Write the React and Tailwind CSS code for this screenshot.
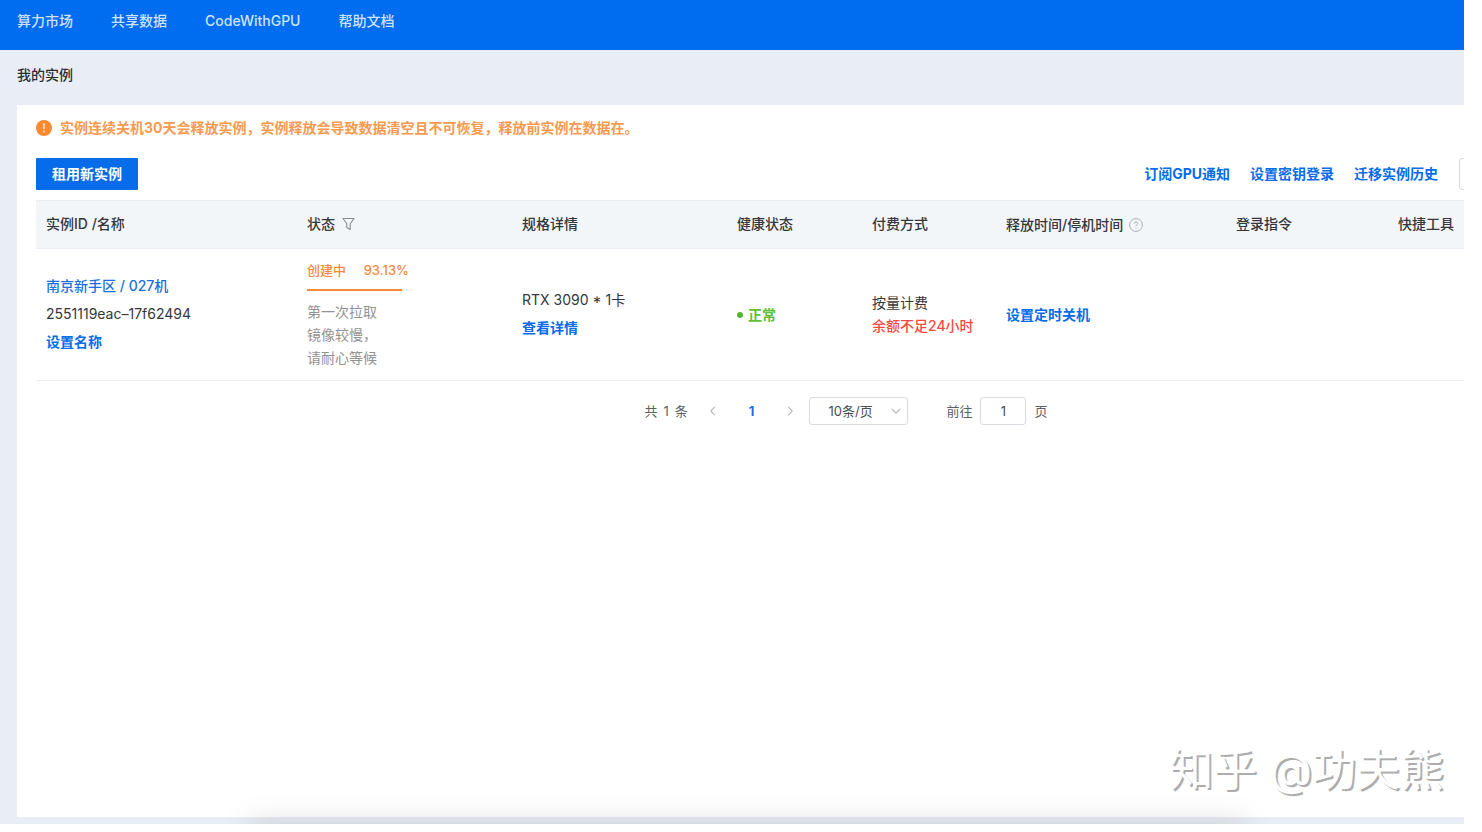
import React, { useState } from "react";

const NAV_ITEMS = ["算力市场", "共享数据", "CodeWithGPU", "帮助文档"];

const TOOLBAR_LINKS = ["订阅GPU通知", "设置密钥登录", "迁移实例历史"];

const INSTANCES = [
  {
    id: "2551119eac–17f62494",
    machine: "南京新手区 / 027机",
    progress: 93.13,
    spec: "RTX 3090 * 1卡",
    health: "正常",
    billing: "按量计费",
    billingTip: "余额不足24小时",
  },
];

function WarningIcon() {
  return (
    <svg className="size-4 shrink-0" viewBox="0 0 16 16" aria-hidden="true">
      <circle cx="8" cy="8" r="8" fill="#f98a32" />
      <path d="M8 3.8v4.8" stroke="#ffe6d2" strokeWidth="1.5" strokeLinecap="round" />
      <circle cx="8" cy="11.5" r="0.9" fill="#ffe6d2" />
    </svg>
  );
}

function FilterIcon() {
  return (
    <svg className="block h-[14px] w-[13px]" viewBox="0 0 13 14" fill="none" stroke="#8b8e93" strokeWidth="1.1" strokeLinejoin="round" aria-hidden="true">
      <path d="M1 1.5h11L8.2 6.8v5.7L4.8 10.6V6.8z" />
    </svg>
  );
}

function HelpIcon() {
  return (
    <svg className="size-[14px]" viewBox="0 0 14 14" fill="none" stroke="#a3a6ab" aria-hidden="true">
      <circle cx="7" cy="7" r="6.4" strokeWidth="0.9" />
      <path d="M5.3 5.6c0-1 .7-1.7 1.7-1.7s1.7.7 1.7 1.6c0 1.2-1.7 1.3-1.7 2.6" />
      <circle cx="7" cy="10" r="0.6" fill="#a3a6ab" stroke="none" />
    </svg>
  );
}

function Chevron({ d }) {
  return (
    <svg className="size-[10px]" viewBox="0 0 10 10" fill="none" stroke="#b4b8bf" strokeWidth="1.1" strokeLinecap="round" strokeLinejoin="round" aria-hidden="true">
      <path d={d} />
    </svg>
  );
}

function TextLink({ children }) {
  return (
    <a href="#" className="font-bold text-[#066cea]">
      {children}
    </a>
  );
}

function InstanceTable() {
  return (
    <table className="mt-[10px] w-full table-fixed border-collapse text-left text-[#34373b]">
      <colgroup>
        <col className="w-[261px]" />
        <col className="w-[215px]" />
        <col className="w-[215px]" />
        <col className="w-[135px]" />
        <col className="w-[134px]" />
        <col className="w-[230px]" />
        <col className="w-[162px]" />
        <col />
      </colgroup>
      <thead className="h-12 border-y border-[#ebeef2] bg-[#f3f6f9] whitespace-nowrap">
        <tr>
          <th className="pb-[2px] pl-[10px] font-medium">实例ID /名称</th>
          <th className="pb-[2px] pl-[10px] font-medium">
            <div className="flex items-center gap-[7px]">
              状态
              <button type="button" aria-label="筛选状态"><FilterIcon /></button>
            </div>
          </th>
          <th className="pb-[2px] pl-[10px] font-medium">规格详情</th>
          <th className="pb-[2px] pl-[10px] font-medium">健康状态</th>
          <th className="pb-[2px] pl-[10px] font-medium">付费方式</th>
          <th className="pl-[10px] font-medium">
            <div className="flex items-center gap-[6px]">
              释放时间/停机时间
              <HelpIcon />
            </div>
          </th>
          <th className="pb-[2px] pl-[10px] font-medium">登录指令</th>
          <th className="pb-[2px] pl-[10px] font-medium">快捷工具</th>
        </tr>
      </thead>
      <tbody>
        {INSTANCES.map((item) => (
          <tr key={item.id} className="h-[132px] border-b border-[#ebeef2]">
            <td className="pb-[2px] pl-[10px] leading-7">
              <a href="#" className="font-medium text-[#1a6fe0]">{item.machine}</a>
              <p>{item.id}</p>
              <TextLink>设置名称</TextLink>
            </td>
            <td className="pl-[10px]">
              <div className="w-[102px]">
                <div className="flex justify-between text-[13px] leading-5 font-medium text-[#f98a3c]">
                  <span>创建中</span>
                  <span>{item.progress}%</span>
                </div>
                <div className="mt-[9px] h-[2px] bg-[#ebeef5]">
                  <div className="h-full bg-[#f98a3c]" style={{ width: `${item.progress}%` }} />
                </div>
                <p className="mt-[9px] leading-[23px] text-[#929292]">
                  第一次拉取<br />镜像较慢，<br />请耐心等候
                </p>
              </div>
            </td>
            <td className="pb-[2px] pl-[10px] leading-7">
              <p>{item.spec}</p>
              <TextLink>查看详情</TextLink>
            </td>
            <td className="pl-[10px]">
              <div className="flex items-center gap-[5px] font-bold text-[#5cc234]">
                <span className="size-[6px] rounded-full bg-[#52b82b]" />
                {item.health}
              </div>
            </td>
            <td className="pb-[2px] pl-[10px] leading-[23px] whitespace-nowrap">
              <p>{item.billing}</p>
              <p className="font-medium text-[#f5483f]">{item.billingTip}</p>
            </td>
            <td className="pl-[10px]"><TextLink>设置定时关机</TextLink></td>
            <td />
            <td />
          </tr>
        ))}
      </tbody>
    </table>
  );
}

function Pagination() {
  const [page, setPage] = useState("1");

  return (
    <div className="mt-4 flex items-center justify-center pl-[192px] text-[13px] text-[#5c5f64]">
      <span className="flex gap-[6px]"><span>共</span><span>1</span><span>条</span></span>
      <button type="button" aria-label="上一页" className="ml-5"><Chevron d="M6.5 1.2 2.8 5l3.7 3.8" /></button>
      <button type="button" className="mx-[31px] font-bold text-[#1a6fe0]">1</button>
      <button type="button" aria-label="下一页"><Chevron d="M3.5 1.2 7.2 5 3.5 8.8" /></button>
      <div className="relative ml-[14px]">
        <select aria-label="每页条数" className="h-7 w-[99px] appearance-none rounded-[3px] border border-[#d9dce3] bg-white pl-[18px] text-[#4b4e53]">
          <option>10条/页</option>
          <option>20条/页</option>
        </select>
        <span className="pointer-events-none absolute top-[9px] right-[7px]">
          <Chevron d="M1 3.2 5 7l4-3.8" />
        </span>
      </div>
      <label htmlFor="goto" className="ml-[38px]">前往</label>
      <input
        id="goto"
        value={page}
        onChange={(e) => setPage(e.target.value)}
        className="mx-2 h-7 w-[46px] rounded-[3px] border border-[#d9dce3] text-center text-[#4b4e53]"
      />
      <span>页</span>
    </div>
  );
}

export default function App() {
  return (
    <div className="h-screen bg-white pr-[18px] pb-2 font-['Inter','Noto_Sans_CJK_SC',sans-serif] text-sm">
      <div className="relative flex h-full flex-col overflow-hidden bg-[#e9edf5]">
        <nav className="flex h-[50px] shrink-0 items-center gap-[38px] bg-[#006cf0] px-[17px] pb-[9px] text-[#cfe2fc]">
          {NAV_ITEMS.map((item) => (
            <a key={item} href="#" className="font-medium">{item}</a>
          ))}
        </nav>

        <h1 className="flex h-[55px] shrink-0 items-center px-[17px] pb-[5px] font-medium text-[#2b2e33]">我的实例</h1>

        <main className="mb-[7px] ml-[17px] flex-1 overflow-hidden bg-white pt-[13px] pl-[19px]">
          <p className="flex h-5 items-center gap-2 font-bold text-[#f99a50]">
            <WarningIcon />
            实例连续关机30天会释放实例，实例释放会导致数据清空且不可恢复，释放前实例在数据在。
          </p>

          <div className="mt-5 flex h-8 items-center">
            <button type="button" className="h-full rounded-[1px] bg-[#066cea] px-4 font-bold text-white">
              租用新实例
            </button>
            <div className="mr-[21px] ml-auto flex gap-5">
              {TOOLBAR_LINKS.map((link) => (
                <TextLink key={link}>{link}</TextLink>
              ))}
            </div>
            <input aria-label="搜索实例" className="-mr-[195px] h-full w-[200px] shrink-0 rounded-[3px] border border-[#d9dce3]" />
          </div>

          <InstanceTable />
          <Pagination />
        </main>

        <div className="pointer-events-none absolute right-[220px] left-[250px] top-full h-10 shadow-[0_2px_32px_2px_rgba(0,0,0,0.15)]" />
        <p className="pointer-events-none absolute right-5 bottom-[22px] text-[44px] leading-[64px] text-white [text-shadow:2px_2px_0_#adadad]">
          知乎 @功夫熊
        </p>
      </div>
    </div>
  );
}
